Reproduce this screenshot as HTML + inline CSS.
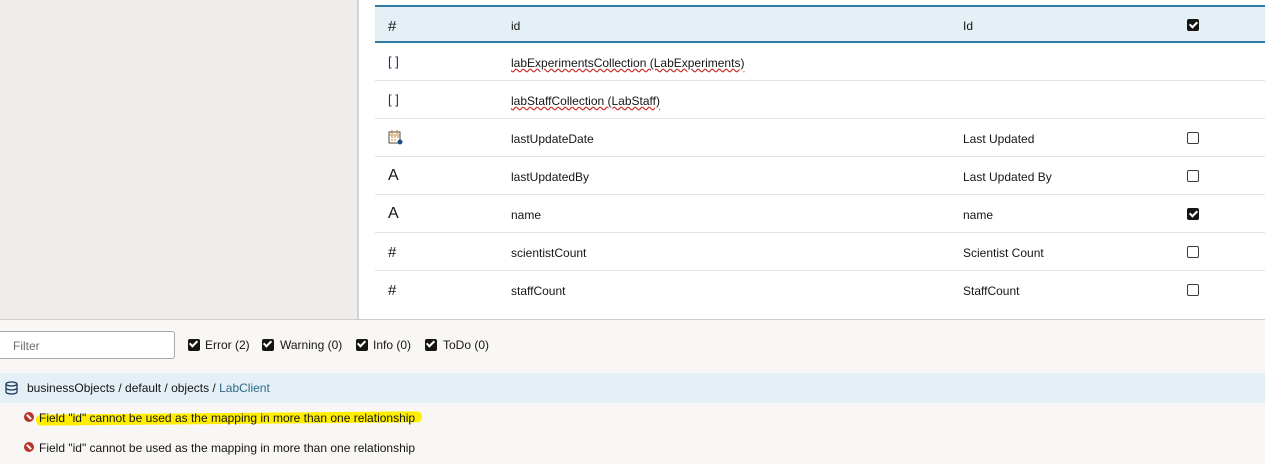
<!DOCTYPE html>
<html><head><style>
*{box-sizing:border-box;margin:0;padding:0}
body{width:1265px;height:464px;overflow:hidden;font-family:"Liberation Sans",sans-serif;font-size:12px;color:#161513;background:#fff;position:relative}
.left{position:absolute;left:0;top:0;width:359px;height:319px;background:#eeedeb;border-right:2px solid #d4d3d1}
.right{position:absolute;left:359px;top:0;width:906px;height:319px;background:#fff}
.row{position:absolute;left:16px;width:890px;height:38px;border-bottom:1px solid #e3e2e0}
.row.sel{background:#e4f0f6;border-top:2px solid #2e7aa0;border-bottom:2px solid #2e7aa0}
.ic{position:absolute;left:13px;top:11px;font-size:15px;color:#161513}
.c2{position:absolute;left:136px;top:13px}
.c3{position:absolute;left:588px;top:13px}
.cb{position:absolute;left:812px;top:13px;width:12px;height:12px;border:1.5px solid #3a3a3a;border-radius:2px;background:#fff}
.cb.on{background:#161513;border-color:#161513}
.cb.on:after,.fcb:after{content:"";position:absolute;left:3px;top:0px;width:3px;height:6px;border:solid #fff;border-width:0 2px 2px 0;transform:rotate(45deg)}
.u{text-decoration:underline;text-decoration-color:#c33;text-decoration-style:wavy}
.bottom{position:absolute;left:0;top:319px;width:1265px;height:145px;background:#f8f7f5;border-top:1px solid #cfcecc}
.filter{position:absolute;left:-4px;top:11px;width:179px;height:28px;border:1px solid #a9a8a6;border-radius:3px;background:#fff;padding:7px 0 0 16px;color:#6f6e6c}
.f{position:absolute;top:18px;color:#161513}
.fcb{position:absolute;top:19px;width:12px;height:12px;background:#161513;border-radius:2px}
.bc{position:absolute;left:0;top:53px;width:1265px;height:30px;background:#e4f0f6;padding:8px 0 0 27px}
.err{position:absolute;left:39px}
.dot{position:absolute;left:24px;width:10px;height:10px;border-radius:50%;background:#b8332c}
.dot:after{content:"";position:absolute;left:2px;top:4px;width:6px;height:2px;background:#fff;transform:rotate(45deg)}
</style></head><body>
<div class="left"></div>
<div class="right">
<div class="row sel" style="top:5px"><span class="ic">#</span><span class="c2" style="top:12px">id</span><span class="c3" style="top:12px">Id</span><span class="cb on" style="top:12px"></span></div>
<div class="row" style="top:43px"><span class="ic" style="font-size:13px;color:#2b2b5a">[ ]</span><span class="c2 u">labExperimentsCollection (LabExperiments)</span></div>
<div class="row" style="top:81px"><span class="ic" style="font-size:13px;color:#2b2b5a">[ ]</span><span class="c2 u">labStaffCollection (LabStaff)</span></div>
<div class="row" style="top:119px"><svg class="ic" width="15" height="15" viewBox="0 0 15 15" style="left:13px;top:11px"><rect x="1" y="2" width="11" height="11" fill="#fff" stroke="#5a4a3a"/><path d="M1 5h11M4 0v4M9 0v4M3 7h2M6 7h2M9 7h2M3 10h2M6 10h2" stroke="#c08030"/><circle cx="12" cy="12" r="2.5" fill="#1a4f8a"/></svg><span class="c2">lastUpdateDate</span><span class="c3">Last Updated</span><span class="cb"></span></div>
<div class="row" style="top:157px"><span class="ic" style="font-size:16px;top:10px">A</span><span class="c2">lastUpdatedBy</span><span class="c3">Last Updated By</span><span class="cb"></span></div>
<div class="row" style="top:195px"><span class="ic" style="font-size:16px;top:10px">A</span><span class="c2">name</span><span class="c3">name</span><span class="cb on"></span></div>
<div class="row" style="top:233px"><span class="ic">#</span><span class="c2">scientistCount</span><span class="c3">Scientist Count</span><span class="cb"></span></div>
<div class="row" style="top:271px;border-bottom:none"><span class="ic">#</span><span class="c2">staffCount</span><span class="c3">StaffCount</span><span class="cb"></span></div>
</div>
<div class="bottom">
<div class="filter">Filter</div>
<span class="fcb" style="left:188px"></span><span class="f" style="left:205px">Error (2)</span>
<span class="fcb" style="left:262px"></span><span class="f" style="left:280px">Warning (0)</span>
<span class="fcb" style="left:356px"></span><span class="f" style="left:373px">Info (0)</span>
<span class="fcb" style="left:425px"></span><span class="f" style="left:443px">ToDo (0)</span>
<div class="bc"><svg style="position:absolute;left:5px;top:8px" width="13" height="14" viewBox="0 0 13 14"><ellipse cx="6.5" cy="3" rx="5.5" ry="2" fill="none" stroke="#1e3a5a" stroke-width="1.3"/><path d="M1 3v8c0 1.1 2.5 2 5.5 2s5.5-.9 5.5-2V3M1 7c0 1.1 2.5 2 5.5 2s5.5-.9 5.5-2" fill="none" stroke="#1e3a5a" stroke-width="1.3"/></svg>businessObjects / default / objects / <span style="color:#2d6a8a">LabClient</span></div>
<span class="dot" style="top:92px"></span>
<div style="position:absolute;left:36px;top:93px;width:386px;height:11px;background:#ffee00;border-radius:5px;transform:rotate(-0.5deg)"></div>
<span class="err" style="top:91px">Field "id" cannot be used as the mapping in more than one relationship</span>
<span class="dot" style="top:122px"></span>
<span class="err" style="top:121px">Field "id" cannot be used as the mapping in more than one relationship</span>
</div>
</body></html>
